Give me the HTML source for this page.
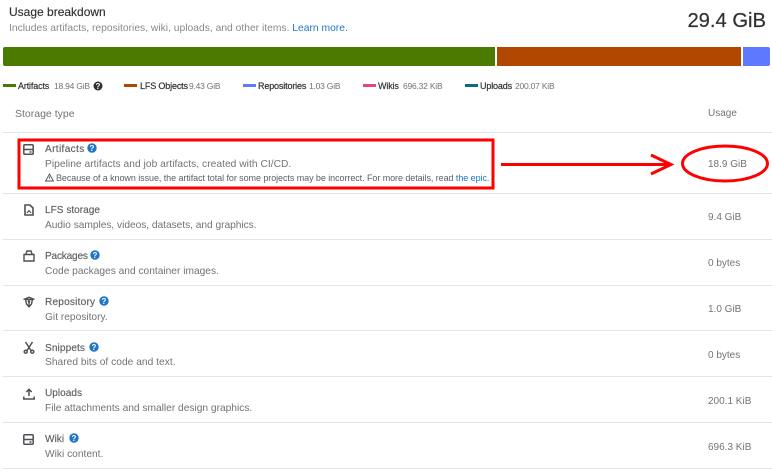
<!DOCTYPE html>
<html><head><meta charset="utf-8"><style>
html,body{margin:0;padding:0;background:#fff}
#p{position:relative;width:772px;height:476px;overflow:hidden;background:#fff;font-family:"Liberation Sans",sans-serif;color:#737278;font-size:10.2px}
#p span,#p a{position:absolute;white-space:nowrap;line-height:14px}
.hr{position:absolute;left:3px;width:769px;height:1px;background:#e6e6e8}
.b{position:absolute;top:47px;height:19px}
.k{position:absolute;top:84px;width:13px;height:3px}
.t{color:#5e5e64;font-size:10.1px;-webkit-text-stroke:.15px #5e5e64}
#p .l{color:#333238;font-size:9px;letter-spacing:-.15px;-webkit-text-stroke:.2px #333238}
.v{color:#737278;font-size:8.5px;letter-spacing:-.22px}
.u{color:#737278;font-size:10px}
svg{position:absolute}
a{color:#1f75cb}
</style></head><body><div id="p">
<span style="left:9px;top:5px;font-size:12px;color:#303030;-webkit-text-stroke:.15px #303030">Usage breakdown</span>
<span style="left:9px;top:22px;font-size:10.3px;color:#89888d">Includes artifacts, repositories, wiki, uploads, and other items. <a style="position:static">Learn more.</a></span>
<span style="right:6px;top:12px;font-size:20.2px;line-height:18px;color:#303030;-webkit-text-stroke:.2px #303030">29.4 GiB</span>

<div class="b" style="left:3px;width:492px;background:#4b7a00;border-radius:2px 0 0 2px"></div>
<div class="b" style="left:497px;width:244px;background:#b14800"></div>
<div class="b" style="left:743px;width:27px;background:#5e79ff;border-radius:0 2px 2px 0"></div>

<div class="k" style="left:3px;background:#4b7a00"></div>
<span class="l" style="left:18px;top:79px">Artifacts</span><span class="v" style="left:54px;top:79px">18.94 GiB</span>
<svg style="left:93px;top:81px" width="10" height="10" viewBox="0 0 10 10"><circle cx="5" cy="5" r="4.5" fill="#303030"/><text x="5" y="8" font-family="Liberation Sans" font-size="8" font-weight="700" text-anchor="middle" fill="#fff">?</text></svg>
<div class="k" style="left:124px;background:#b14800"></div>
<span class="l" style="left:140px;top:79px">LFS Objects</span><span class="v" style="left:189px;top:79px">9.43 GiB</span>
<div class="k" style="left:243px;background:#5e79ff"></div>
<span class="l" style="left:258px;top:79px">Repositories</span><span class="v" style="left:309px;top:79px">1.03 GiB</span>
<div class="k" style="left:363px;background:#e0458a"></div>
<span class="l" style="left:378px;top:79px">Wikis</span><span class="v" style="left:403px;top:79px">696.32 KiB</span>
<div class="k" style="left:465px;background:#0b6a85"></div>
<span class="l" style="left:480px;top:79px">Uploads</span><span class="v" style="left:515px;top:79px">200.07 KiB</span>

<span class="u" style="left:15px;top:107px;font-size:10.5px">Storage type</span>
<span class="u" style="left:708px;top:107px">Usage</span>

<div class="hr" style="top:132px"></div>
<div class="hr" style="top:193px"></div>
<div class="hr" style="top:239px"></div>
<div class="hr" style="top:285px"></div>
<div class="hr" style="top:330px"></div>
<div class="hr" style="top:376px"></div>
<div class="hr" style="top:422px"></div>
<div class="hr" style="top:468px"></div>

<!-- Artifacts -->
<svg style="left:23px;top:144px" width="11" height="11" viewBox="0 0 11 11" fill="none" stroke="#4f4f55" stroke-width="1.5"><rect x=".8" y=".8" width="9.4" height="9.4" rx="1"/><path d="M1 5.5h9"/><path d="M6.5 8h2"/></svg>
<span class="t" style="left:45px;top:143px;letter-spacing:.35px">Artifacts</span>
<svg style="left:87px;top:143px" width="10" height="10" viewBox="0 0 10 10"><circle cx="5" cy="5" r="4.7" fill="#1f75cb"/><text x="5" y="8" font-family="Liberation Sans" font-size="8" font-weight="700" text-anchor="middle" fill="#fff">?</text></svg>
<span style="left:45px;top:158px;letter-spacing:.05px">Pipeline artifacts and job artifacts, created with CI/CD.</span>
<svg style="left:45px;top:173px" width="9" height="9" viewBox="0 0 9 9" fill="none" stroke="#4f4f55" stroke-width=".9"><path d="M4.5 1 8.4 8H.6z"/><path d="M4.5 3.5v2.3"/></svg>
<span style="left:56px;top:171px;font-size:9px;color:#5e5e64;letter-spacing:-.07px">Because of a known issue, the artifact total for some projects may be incorrect. For more details, read <a style="position:static">the epic</a>.</span>
<span class="u" style="left:708px;top:158px">18.9 GiB</span>

<!-- LFS -->
<svg style="left:24px;top:204px" width="10" height="12" viewBox="0 0 10 12" fill="none" stroke="#4f4f55" stroke-width="1.6"><path d="M1 1h5l3 3v7H1z"/><path d="M3 9 5 6.5 7 9" stroke-width="1.1"/></svg>
<span class="t" style="left:45px;top:204px">LFS storage</span>
<span style="left:45px;top:219px;letter-spacing:-.03px">Audio samples, videos, datasets, and graphics.</span>
<span class="u" style="left:708px;top:211px">9.4 GiB</span>

<!-- Packages -->
<svg style="left:23px;top:250px" width="12" height="12" viewBox="0 0 12 12" fill="none" stroke="#4f4f55" stroke-width="1.4"><path d="M1 4.5h10v6.5H1z"/><path d="M2.8 4.5 4 1h4l1.2 3.5"/></svg>
<span class="t" style="left:45px;top:250px;letter-spacing:-.2px">Packages</span>
<svg style="left:90px;top:250px" width="10" height="10" viewBox="0 0 10 10"><circle cx="5" cy="5" r="4.7" fill="#1f75cb"/><text x="5" y="8" font-family="Liberation Sans" font-size="8" font-weight="700" text-anchor="middle" fill="#fff">?</text></svg>
<span style="left:45px;top:265px">Code packages and container images.</span>
<span class="u" style="left:708px;top:257px">0 bytes</span>

<!-- Repository -->
<svg style="left:23px;top:296px" width="12" height="12" viewBox="0 0 12 12" fill="none" stroke="#4f4f55" stroke-width="1.4"><path d="M.5 3.5 6 1.3l5.5 2.2"/><path d="M2.5 3.5h7L8.5 8 6 10.8 3.5 8z"/><circle cx="6" cy="5.5" r="1.3" fill="#4f4f55" stroke="none"/><path d="M6 6v4"/></svg>
<span class="t" style="left:45px;top:296px;letter-spacing:.2px">Repository</span>
<svg style="left:99px;top:296px" width="10" height="10" viewBox="0 0 10 10"><circle cx="5" cy="5" r="4.7" fill="#1f75cb"/><text x="5" y="8" font-family="Liberation Sans" font-size="8" font-weight="700" text-anchor="middle" fill="#fff">?</text></svg>
<span style="left:45px;top:311px">Git repository.</span>
<span class="u" style="left:708px;top:303px">1.0 GiB</span>

<!-- Snippets -->
<svg style="left:23px;top:341px" width="12" height="13" viewBox="0 0 12 13" fill="none" stroke="#4f4f55" stroke-width="1.5"><path d="M2.5 1 8 9.5"/><path d="M9.5 1 4 9.5"/><circle cx="2.7" cy="10.7" r="1.5"/><circle cx="9.3" cy="10.7" r="1.5"/></svg>
<span class="t" style="left:45px;top:342px;letter-spacing:.1px">Snippets</span>
<svg style="left:89px;top:342px" width="10" height="10" viewBox="0 0 10 10"><circle cx="5" cy="5" r="4.7" fill="#1f75cb"/><text x="5" y="8" font-family="Liberation Sans" font-size="8" font-weight="700" text-anchor="middle" fill="#fff">?</text></svg>
<span style="left:45px;top:356px;letter-spacing:.03px">Shared bits of code and text.</span>
<span class="u" style="left:708px;top:349px">0 bytes</span>

<!-- Uploads -->
<svg style="left:23px;top:388px" width="12" height="12" viewBox="0 0 12 12" fill="none" stroke="#4f4f55" stroke-width="1.5"><path d="M6 8V1.5"/><path d="M3.3 4 6 1.3 8.7 4"/><path d="M.8 8.5v2.5h10.4V8.5"/></svg>
<span class="t" style="left:45px;top:387px">Uploads</span>
<span style="left:45px;top:402px">File attachments and smaller design graphics.</span>
<span class="u" style="left:708px;top:395px">200.1 KiB</span>

<!-- Wiki -->
<svg style="left:23px;top:434px" width="11" height="11" viewBox="0 0 11 11" fill="none" stroke="#4f4f55" stroke-width="1.5"><rect x=".8" y=".8" width="9.4" height="9.4" rx="1"/><path d="M1 5.5h9"/><path d="M6.5 8h2"/></svg>
<span class="t" style="left:45px;top:433px">Wiki</span>
<svg style="left:69px;top:433px" width="10" height="10" viewBox="0 0 10 10"><circle cx="5" cy="5" r="4.7" fill="#1f75cb"/><text x="5" y="8" font-family="Liberation Sans" font-size="8" font-weight="700" text-anchor="middle" fill="#fff">?</text></svg>
<span style="left:45px;top:448px">Wiki content.</span>
<span class="u" style="left:708px;top:441px">696.3 KiB</span>

<!-- Annotations -->
<svg style="left:0;top:0" width="772" height="476" fill="none" stroke="#f00" stroke-width="3">
<rect x="19" y="140" width="474" height="48"/>
<path d="M501 164.5H671"/>
<path d="M651 155 671 164.5 651 174"/>
<ellipse cx="725" cy="163.5" rx="42.5" ry="17.5"/>
</svg>
</div></body></html>
